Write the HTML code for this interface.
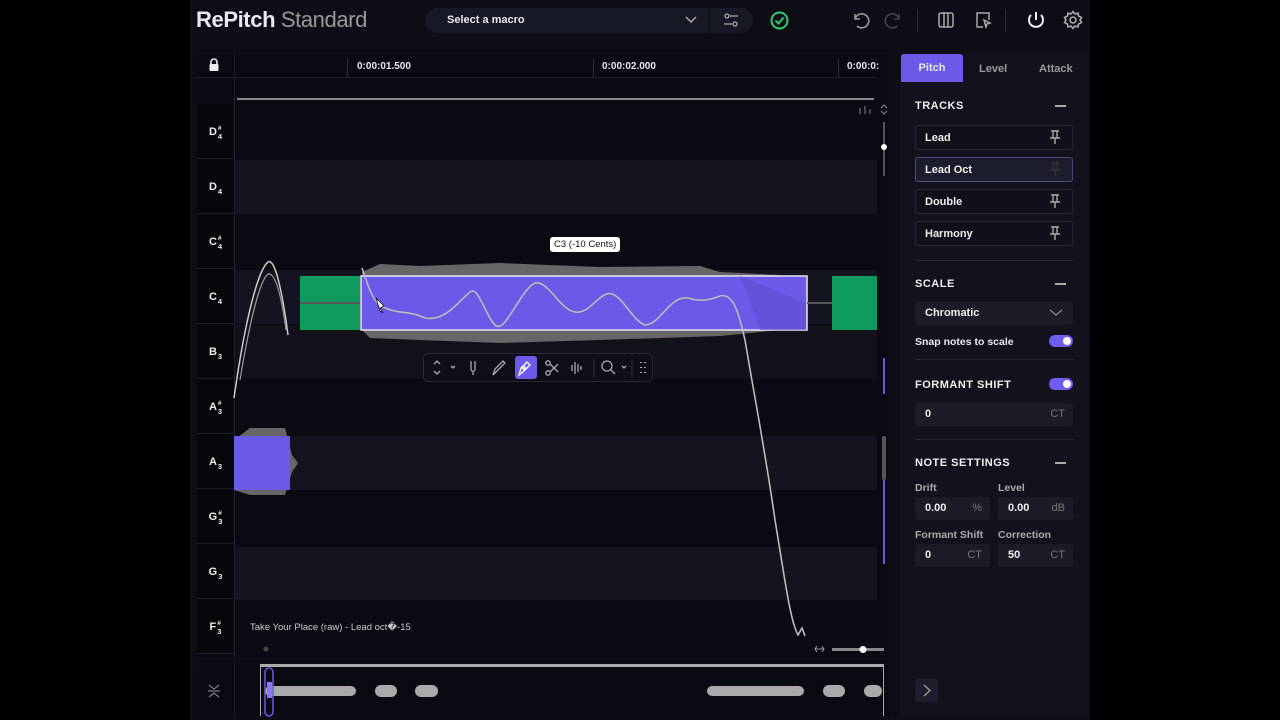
<!DOCTYPE html>
<html><head><meta charset="utf-8"><style>
*{margin:0;padding:0;box-sizing:border-box}
body{width:1280px;height:720px;background:#000;font-family:"Liberation Sans",sans-serif;position:relative;overflow:hidden;color:#e8e8ee}
.a{position:absolute}
.app{left:190px;top:0;width:900px;height:720px;background:#0d0d16}
.key{position:absolute;left:197px;width:37px;background:#07070c;border-bottom:1px solid #1e1f2a;color:#eee;font-weight:bold;font-size:11px;display:flex;align-items:center;justify-content:center}
.ss{display:inline-flex;flex-direction:column;justify-content:flex-end;height:18px;margin-left:1px;line-height:1}
.ss i{font-style:normal;font-size:7.5px;display:block}
.ss i.s{font-size:6.5px}
.key b{line-height:1;margin-top:2px}
.row{position:absolute;left:235px;width:642px}
.rp{left:900px;top:54px;width:188px;height:662px;background:#11121c}
.h{font-size:11px;font-weight:bold;letter-spacing:.5px;color:#eee}
.dash{width:11px;height:2px;background:#aaa}
.tr{position:absolute;left:915px;width:158px;height:25px;border:1px solid #262836;border-radius:3px;background:#0f1019;font-size:11px;font-weight:bold;padding:6px 9px;color:#eee}
.in{position:absolute;height:23px;background:#1b1c28;border-radius:3px;font-size:11px;font-weight:bold;padding:5px 10px;color:#eee}
.in span{position:absolute;right:8px;top:5px;color:#777;font-weight:normal}
.lbl{position:absolute;font-size:10.5px;color:#aaa;font-weight:bold}
.tog{position:absolute;width:24px;height:12px;border-radius:6px;background:#6f5cf0}
.tog:after{content:"";position:absolute;right:2px;top:2px;width:8px;height:8px;border-radius:50%;background:#fff}
.sep{position:absolute;left:915px;width:158px;height:1px;background:#262836}
</style></head><body>
<div class="a app"></div>
<div class="a" style="left:196px;top:7px;font-size:22px;letter-spacing:-.4px"><b>RePitch</b> <span style="color:#999">Standard</span></div>
<div class="a" style="left:425px;top:8px;width:328px;height:25px;border-radius:13px;background:#171826"></div>
<div class="a" style="left:708px;top:8px;width:1px;height:25px;background:#0d0d16"></div>
<div class="a" style="left:447px;top:14px;font-size:11px;font-weight:bold">Select a macro</div>
<svg class="a" style="left:684px;top:14px" width="14" height="12"><path d="M2 3l5 5 5-5" stroke="#aaa" fill="none" stroke-width="1.5"/></svg>
<svg class="a" style="left:723px;top:12px" width="16" height="16" stroke="#aaa" fill="none" stroke-width="1.3"><circle cx="4" cy="4" r="2"/><path d="M7 4h8M1 12h8"/><circle cx="12" cy="12" r="2"/></svg>
<svg class="a" style="left:770px;top:11px" width="19" height="19"><circle cx="9.5" cy="9.5" r="8" stroke="#2ecc71" stroke-width="2" fill="none"/><path d="M5.5 9.5l3 3 5-6" stroke="#2ecc71" stroke-width="2" fill="none"/></svg>
<svg class="a" style="left:850px;top:11px" width="20" height="20" stroke="#999" fill="none" stroke-width="1.6"><path d="M5 3v5h5"/><path d="M5 8a7 7 0 1 1 2 7"/></svg>
<svg class="a" style="left:884px;top:11px" width="20" height="20" stroke="#444" fill="none" stroke-width="1.6"><path d="M15 3v5h-5"/><path d="M15 8a7 7 0 1 0-2 7"/></svg>
<div class="a" style="left:917px;top:10px;width:1px;height:22px;background:#2a2b36"></div>
<svg class="a" style="left:937px;top:11px" width="18" height="18" stroke="#aaa" fill="none" stroke-width="1.5"><rect x="2" y="2" width="14" height="14" rx="2"/><path d="M7 2v14M11 2v14"/></svg>
<svg class="a" style="left:974px;top:11px" width="18" height="18" stroke="#aaa" fill="none" stroke-width="1.5"><path d="M9 16H3V2h12v7"/><path d="M10 9l6 3-3 1-1 3z"/></svg>
<div class="a" style="left:1005px;top:10px;width:1px;height:22px;background:#2a2b36"></div>
<svg class="a" style="left:1026px;top:10px" width="20" height="20" stroke="#eee" fill="none" stroke-width="2"><path d="M10 2v8"/><path d="M5 5a7 7 0 1 0 10 0"/></svg>
<svg class="a" style="left:1063px;top:10px" width="20" height="20" stroke="#aaa" fill="none" stroke-width="1.6"><circle cx="10" cy="10" r="3"/><path d="M10 1.5l2 2.5 3-1 .5 3 3 1.5-1.5 2.5 1.5 2.5-3 1.5-.5 3-3-1-2 2.5-2-2.5-3 1-.5-3-3-1.5L3 10 1.5 7.5l3-1.5.5-3 3 1z"/></svg>

<div class="a" style="left:197px;top:54px;width:693px;height:604px;background:#0a0a12;border-radius:4px"></div>
<div class="a" style="left:234px;top:54px;width:1px;height:604px;background:#1e1f2a"></div>
<div class="a" style="left:197px;top:77px;width:680px;height:1px;background:#1e1f2a"></div>
<svg class="a" style="left:208px;top:58px" width="12" height="14"><path d="M3 6V4a3 3 0 0 1 6 0v2" stroke="#eee" fill="none" stroke-width="1.6"/><rect x="1.5" y="6" width="9" height="7" rx="1" fill="#eee"/></svg>
<div class="a" style="left:347px;top:58px;width:1px;height:19px;background:#2a2b36"></div>
<div class="a" style="left:593px;top:58px;width:1px;height:19px;background:#2a2b36"></div>
<div class="a" style="left:838px;top:58px;width:1px;height:19px;background:#2a2b36"></div>
<div class="a" style="left:357px;top:61px;font-size:10px;font-weight:bold">0:00:01.500</div>
<div class="a" style="left:602px;top:61px;font-size:10px;font-weight:bold">0:00:02.000</div>
<div class="a" style="left:847px;top:61px;font-size:10px;font-weight:bold">0:00:0:</div>
<div class="a" style="left:237px;top:98px;width:637px;height:2px;background:#888"></div>

<div class="row" style="top:160px;height:54px;background:#131420"></div>
<div class="row" style="top:270px;height:54px;background:#131420"></div>
<div class="row" style="top:325px;height:54px;background:#101119"></div>
<div class="row" style="top:436px;height:54px;background:#131420"></div>
<div class="row" style="top:547px;height:53px;background:#131420"></div>

<div class="key" style="top:104px;height:55px"><b>D</b><span class="ss"><i class="s">#</i><i>4</i></span></div>
<div class="key" style="top:159px;height:55px"><b>D</b><span class="ss"><i>4</i></span></div>
<div class="key" style="top:214px;height:55px"><b>C</b><span class="ss"><i class="s">#</i><i>4</i></span></div>
<div class="key" style="top:269px;height:55px"><b>C</b><span class="ss"><i>4</i></span></div>
<div class="key" style="top:324px;height:55px"><b>B</b><span class="ss"><i>3</i></span></div>
<div class="key" style="top:379px;height:55px"><b>A</b><span class="ss"><i class="s">#</i><i>3</i></span></div>
<div class="key" style="top:434px;height:55px"><b>A</b><span class="ss"><i>3</i></span></div>
<div class="key" style="top:489px;height:55px"><b>G</b><span class="ss"><i class="s">#</i><i>3</i></span></div>
<div class="key" style="top:544px;height:55px"><b>G</b><span class="ss"><i>3</i></span></div>
<div class="key" style="top:599px;height:55px"><b>F</b><span class="ss"><i class="s">#</i><i>3</i></span></div>

<svg class="a" style="left:0;top:0" width="1280" height="720">
<path d="M362 272 L380 264 L420 266 L500 263 L600 267 L700 266 L720 272 L780 275 L780 330 L720 336 L600 340 L500 343 L420 340 L370 338 L362 330Z" fill="#666"/>
<path d="M234 440 L250 428 L285 428 L292 455 L298 463 L292 472 L285 495 L250 495 L234 490Z" fill="#666"/>
<rect x="300" y="276" width="60" height="54" fill="#0e9a5c"/>
<rect x="832" y="276" width="45" height="54" fill="#0e9a5c"/>
<rect x="361" y="276" width="446" height="54" fill="#6b5ae8" stroke="#e8e8f0" stroke-width="1.5"/>
<path d="M740 276 L806 303 L806 330 L760 330Z" fill="#5d4fd0" opacity=".6"/>
<rect x="234" y="436" width="56" height="54" fill="#6b5ae8"/>
<path d="M300 303h60M807 303h25" stroke="#555" stroke-width="2"/>
<path d="M234 398 C245 320 258 270 268 262 C275 258 282 290 288 335" stroke="#ccc" stroke-width="1.5" fill="none"/>
<path d="M240 380 C250 320 260 280 268 274 C276 272 282 300 286 330" stroke="#999" stroke-width="1.2" fill="none"/>
<path d="M362 268 C368 285 372 300 380 305 C395 315 410 310 425 318 C445 322 460 300 470 292 C478 285 485 315 495 325 C505 335 520 290 535 283 C548 280 560 310 575 312 C590 315 600 290 612 294 C624 298 632 320 645 325 C660 325 670 295 688 298 C700 302 710 300 720 296 C735 292 740 320 745 340 C755 400 765 450 775 520 C785 580 790 620 798 635 L802 628 L805 636" stroke="#bbb" stroke-width="1.6" fill="none"/>
<path d="M376 298 L384 306 L380 308 L383 313 L380 311 Z" fill="#fff" stroke="#000" stroke-width=".7"/>
<rect x="883" y="122" width="2" height="54" fill="#555"/><circle cx="884" cy="147" r="3" fill="#fff"/>
<rect x="883" y="358" width="2" height="36" fill="#6b5ae8"/>
<rect x="883" y="436" width="2" height="128" fill="#6b5ae8"/>
<rect x="882" y="436" width="4" height="44" rx="2" fill="#555"/>
<rect x="832" y="648" width="52" height="3" fill="#888"/><circle cx="863" cy="649.5" r="3.5" fill="#fff"/>
<path d="M815 649h9M817 646l-2 3 2 3M822 646l2 3-2 3" stroke="#999" fill="none"/>
<circle cx="266" cy="649" r="2.5" fill="#444"/>
<path d="M860 108v6M865 106v8M870 109v5" stroke="#888"/>
<path d="M881 108l3-3 3 3M881 111l3 3 3-3" stroke="#888" fill="none"/>
</svg>
<div class="a" style="left:550px;top:237px;padding:2px 4px;background:#fff;color:#111;font-size:9.5px;border-radius:3px">C3 (-10 Cents)</div>
<div class="a" style="left:250px;top:622px;font-size:9.5px;color:#ccc">Take Your Place (raw) - Lead oct�-15</div>

<div class="a" style="left:423px;top:353px;width:230px;height:29px;background:#0d0e16;border:1px solid #262836;border-radius:5px"></div>
<div class="a" style="left:515px;top:356px;width:22px;height:23px;background:#6b5ae8;border-radius:3px"></div>
<svg class="a" style="left:423px;top:353px" width="230" height="29" stroke="#aaa" fill="none" stroke-width="1.3">
<path d="M11 11l3-3 3 3M11 18l3 3 3-3"/><path d="M28 13l2 2 2-2"/>
<path d="M48 8v8c0 3 4 3 4 0V8M50 19v3"/>
<path d="M70 22l2-6 8-8 2 2-8 8z"/>
<path d="M96 22l2-7 6-6 3 3-6 6z" stroke="#fff"/><circle cx="101" cy="15" r="1.3" stroke="#fff"/>
<circle cx="125" cy="10" r="2.2"/><circle cx="125" cy="20" r="2.2"/><path d="M127 11l8 8M127 19l8-8"/>
<path d="M149 12v6M152 9v12M155 11v8M158 13v4"/>
<line x1="171" y1="6" x2="171" y2="24" stroke="#2a2b36"/>
<circle cx="184" cy="13" r="5"/><path d="M188 17l4 4"/><path d="M199 13l2 2 2-2"/>
<line x1="209" y1="6" x2="209" y2="24" stroke="#2a2b36"/>
<path d="M218 9v1M222 9v1M218 14v1M222 14v1M218 19v1M222 19v1" stroke-width="2"/>
</svg>

<div class="a" style="left:197px;top:664px;width:693px;height:52px;background:#0a0a12;border-radius:4px"></div>
<div class="a" style="left:234px;top:664px;width:1px;height:52px;background:#1e1f2a"></div>
<div class="a" style="left:260px;top:664px;width:624px;height:3px;background:#aaa"></div>
<div class="a" style="left:260px;top:664px;width:1px;height:52px;background:#aaa"></div>
<div class="a" style="left:883px;top:664px;width:1px;height:52px;background:#aaa"></div>
<svg class="a" style="left:0;top:0" width="1280" height="720">
<path d="M209 685l5 4 5-4M209 697l5-4 5 4M208 691h12" stroke="#999" fill="none"/>
<g fill="#aaa"><rect x="265" y="686" width="91" height="10" rx="5"/><rect x="375" y="685" width="22" height="12" rx="6"/><rect x="415" y="685" width="23" height="12" rx="6"/><rect x="707" y="686" width="97" height="10" rx="5"/><rect x="823" y="685" width="22" height="12" rx="6"/><rect x="864" y="685" width="18" height="12" rx="6"/></g>
<rect x="265" y="668" width="8" height="48" rx="4" fill="none" stroke="#6b5ae8" stroke-width="1.5"/>
<rect x="267" y="682" width="5" height="16" fill="#8878ff"/>
</svg>

<div class="a rp"></div>
<div class="a" style="left:901px;top:54px;width:62px;height:28px;background:#6b5ae8;border-radius:3px 3px 0 0;font-size:11px;font-weight:bold;text-align:center;line-height:28px">Pitch</div>
<div class="a" style="left:979px;top:63px;font-size:11px;color:#999;font-weight:bold">Level</div>
<div class="a" style="left:1039px;top:63px;font-size:11px;color:#999;font-weight:bold">Attack</div>
<div class="a h" style="left:915px;top:100px">TRACKS</div><div class="a dash" style="left:1055px;top:105px"></div>
<div class="tr" style="top:125px">Lead</div>
<div class="tr" style="top:157px;background:#1b1c2c;border-color:#4a4a80">Lead Oct</div>
<div class="tr" style="top:189px">Double</div>
<div class="tr" style="top:221px">Harmony</div>
<svg class="a" style="left:1048px;top:130px" width="14" height="110" stroke="#aaa" fill="none" stroke-width="1.4"><path d="M3 1h8M5 1v7M9 1v7M2 8h10M7 8v6"/><g stroke="#333" transform="translate(0,32)"><path d="M3 1h8M5 1v7M9 1v7M2 8h10M7 8v6"/></g><g transform="translate(0,64)"><path d="M3 1h8M5 1v7M9 1v7M2 8h10M7 8v6"/></g><g transform="translate(0,96)"><path d="M3 1h8M5 1v7M9 1v7M2 8h10M7 8v6"/></g></svg>
<div class="sep" style="top:260px"></div>
<div class="a h" style="left:915px;top:278px">SCALE</div><div class="a dash" style="left:1055px;top:283px"></div>
<div class="in" style="left:915px;top:302px;width:158px">Chromatic</div>
<svg class="a" style="left:1049px;top:308px" width="14" height="10"><path d="M1 2l6 5 6-5" stroke="#888" fill="none" stroke-width="1.3"/></svg>
<div class="a" style="left:915px;top:336px;font-size:10.5px;font-weight:bold">Snap notes to scale</div>
<div class="tog" style="left:1049px;top:335px"></div>
<div class="sep" style="top:359px"></div>
<div class="a h" style="left:915px;top:379px">FORMANT SHIFT</div>
<div class="tog" style="left:1049px;top:378px"></div>
<div class="in" style="left:915px;top:403px;width:158px">0<span>CT</span></div>
<div class="sep" style="top:439px"></div>
<div class="a h" style="left:915px;top:457px">NOTE SETTINGS</div><div class="a dash" style="left:1055px;top:462px"></div>
<div class="lbl" style="left:915px;top:482px">Drift</div>
<div class="lbl" style="left:998px;top:482px">Level</div>
<div class="in" style="left:915px;top:497px;width:75px">0.00<span>%</span></div>
<div class="in" style="left:998px;top:497px;width:75px">0.00<span>dB</span></div>
<div class="lbl" style="left:915px;top:529px">Formant Shift</div>
<div class="lbl" style="left:998px;top:529px">Correction</div>
<div class="in" style="left:915px;top:544px;width:75px">0<span>CT</span></div>
<div class="in" style="left:998px;top:544px;width:75px">50<span>CT</span></div>
<div class="a" style="left:915px;top:679px;width:23px;height:23px;background:#1e1f2e;border-radius:3px"></div>
<svg class="a" style="left:915px;top:679px" width="23" height="23"><path d="M9 6l6 5.5-6 5.5" stroke="#999" fill="none" stroke-width="1.4"/></svg>
</body></html>
